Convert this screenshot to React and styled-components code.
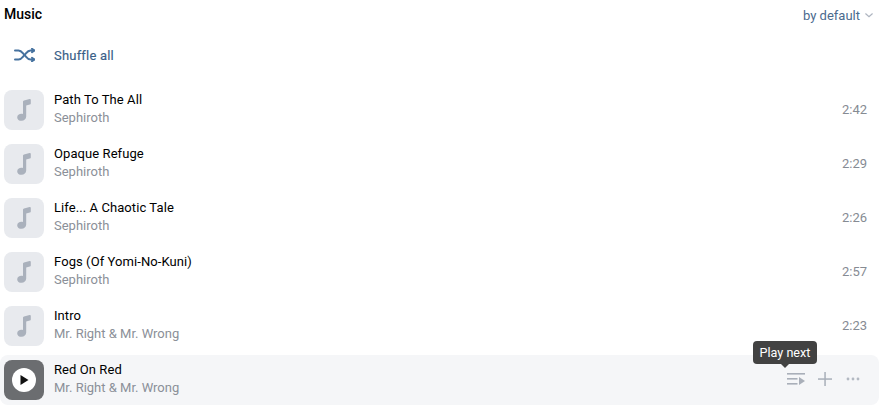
import React from "react";
import styled, { createGlobalStyle } from "styled-components";

const Global = createGlobalStyle`
  html, body { margin: 0; padding: 0; background: #fff; }
  body { font-family: Roboto, "Liberation Sans", sans-serif; overflow: hidden; }
`;

const Page = styled.div`
  width: 887px;
  height: 412px;
  padding-right: 8px;
  box-sizing: border-box;
`;

const Header = styled.header`
  height: 28px;
  margin-bottom: 2px;
  padding: 0 6px 0 4px;
  display: flex;
  align-items: center;
  justify-content: space-between;
`;

const Title = styled.h2`
  margin: 0;
  font-size: 14px;
  font-weight: 500;
  color: #000;
`;

const Sort = styled.div`
  display: flex;
  align-items: center;
  gap: 5px;
  font-size: 13px;
  margin-top: 2px;
  color: #4a6a8e;
`;

const ShuffleRow = styled.div`
  height: 50px;
  margin-bottom: 5px;
  display: flex;
  align-items: center;
  padding-left: 4px;
  font-size: 13px;
  letter-spacing: 0.2px;
  color: #3a5f88;
  -webkit-text-stroke: 0.15px #3a5f88;
`;

const ShuffleIcon = styled.div`
  width: 40px;
  display: flex;
  justify-content: center;
  margin-right: 10px;
  color: #46729f;
`;

const List = styled.div`
  display: flex;
  flex-direction: column;
  gap: 4px;
`;

const Row = styled.div`
  position: relative;
  height: 50px;
  box-sizing: border-box;
  padding: 5px 12px 5px 4px;
  display: flex;
  align-items: center;
  border-radius: 8px;
  background: ${(p) => (p.$active ? "#f5f6f8" : "transparent")};
`;

const Thumb = styled.div`
  width: 40px;
  height: 40px;
  flex: none;
  border-radius: 8px;
  margin-right: 10px;
  display: flex;
  align-items: center;
  justify-content: center;
  background: ${(p) => (p.$active ? "#6b6d70" : "#e8eaee")};
`;

const PlayCircle = styled.div`
  width: 24px;
  height: 24px;
  border-radius: 50%;
  background: #fff;
  display: flex;
  align-items: center;
  justify-content: center;
`;

const Meta = styled.div`
  flex: 1;
  display: flex;
  flex-direction: column;
  gap: 3px;
  min-width: 0;
  margin-top: -4px;
`;

const Name = styled.div`
  font-size: 13px;
  letter-spacing: 0.08px;
  line-height: 15px;
  color: #000;
`;

const Artist = styled.div`
  font-size: 13px;
  line-height: 15px;
  color: #8b9098;
`;

const Duration = styled.div`
  font-size: 13px;
  margin-top: -2px;
  color: #868b93;
`;

const Actions = styled.div`
  display: flex;
  align-items: center;
  gap: 14px;
  margin-top: -3px;
  margin-right: 7px;
`;

const QueueIcon = styled.svg`
  margin-right: -1px;
`;

const Tooltip = styled.div`
  position: absolute;
  left: 753px;
  top: -14px;
  height: 23px;
  width: 64px;
  border-radius: 4px;
  background: #424242;
  color: #fff;
  font-size: 12.6px;
  display: flex;
  align-items: center;
  justify-content: center;
  &::after {
    content: "";
    position: absolute;
    left: 50%;
    bottom: -4px;
    margin-left: -4px;
    border-left: 4px solid transparent;
    border-right: 4px solid transparent;
    border-top: 4px solid #424242;
  }
`;

const Note = () => (
  <svg width="16" height="24" viewBox="0 0 16 24">
    <path d="M7 3.6 Q7 2.8 8 2.5 L13.6 1.1 Q14.8 0.9 14.8 2 V5.6 Q14.8 6.4 13.8 6.6 L10.2 7.4 V18.6 C10.2 21.2 8 22.8 5.6 22.8 C3 22.8 1.2 21.4 1.2 19.4 C1.2 17.2 3.2 15.8 5.4 15.8 C6 15.8 6.6 15.9 7 16.1 Z" fill="#aab1bc" />
  </svg>
);

const tracks = [
  ["Path To The All", "Sephiroth", "2:42"],
  ["Opaque Refuge", "Sephiroth", "2:29"],
  ["Life... A Chaotic Tale", "Sephiroth", "2:26"],
  ["Fogs (Of Yomi-No-Kuni)", "Sephiroth", "2:57"],
  ["Intro", "Mr. Right & Mr. Wrong", "2:23"],
];

export default function App() {
  return (
    <Page>
      <Global />
      <Header>
        <Title>Music</Title>
        <Sort>
          by default
          <svg width="8" height="5" viewBox="0 0 8 5">
            <path d="M0.7 0.8 L4 3.8 L7.3 0.8" fill="none" stroke="#aeb5c0" strokeWidth="1.2" strokeLinecap="round" />
          </svg>
        </Sort>
      </Header>
      <ShuffleRow>
        <ShuffleIcon>
          <svg width="22" height="14" viewBox="0 0 22 14" fill="none" stroke="currentColor" strokeWidth="2" strokeLinecap="round" strokeLinejoin="round">
            <path d="M2 2.5 H5.5 C8.5 2.5 9.5 5 11.5 7 C13.5 9 14.5 11.5 17.5 11.5 H21" />
            <path d="M2 11.5 H5.5 C8.5 11.5 9.5 9 11.5 7 C13.5 5 14.5 2.5 17.5 2.5 H21" />
            <path d="M19 0.8 L21.5 2.5 L19 4.2" />
            <path d="M19 9.8 L21.5 11.5 L19 13.2" />
          </svg>
        </ShuffleIcon>
        Shuffle all
      </ShuffleRow>
      <List>
        {tracks.map(([n, a, d]) => (
          <Row key={n}>
            <Thumb><Note /></Thumb>
            <Meta>
              <Name>{n}</Name>
              <Artist>{a}</Artist>
            </Meta>
            <Duration>{d}</Duration>
          </Row>
        ))}
        <Row $active>
          <Thumb $active>
            <PlayCircle>
              <svg width="10" height="12" viewBox="0 0 10 12"><path d="M1.5 1 L9.5 6 L1.5 11 Z" fill="#111" /></svg>
            </PlayCircle>
          </Thumb>
          <Meta>
            <Name>Red On Red</Name>
            <Artist>Mr. Right &amp; Mr. Wrong</Artist>
          </Meta>
          <Tooltip>Play next</Tooltip>
          <Actions>
            <QueueIcon width="18" height="12" viewBox="0 0 18 12" fill="#a9afb9">
              <rect x="0" y="0" width="18" height="1.6" />
              <rect x="0" y="5" width="10.5" height="1.6" />
              <rect x="0" y="10" width="10.5" height="1.6" />
              <path d="M12 4 L18 8 L12 12 Z" />
            </QueueIcon>
            <svg width="14" height="14" viewBox="0 0 14 14" fill="#a9afb9">
              <rect x="6.3" y="0" width="1.5" height="14" />
              <rect x="0" y="6.3" width="14" height="1.5" />
            </svg>
            <svg width="14" height="4" viewBox="0 0 14 4" fill="#b3b9c2">
              <circle cx="2" cy="2" r="1.4" />
              <circle cx="7" cy="2" r="1.4" />
              <circle cx="12" cy="2" r="1.4" />
            </svg>
          </Actions>
        </Row>
      </List>
    </Page>
  );
}
